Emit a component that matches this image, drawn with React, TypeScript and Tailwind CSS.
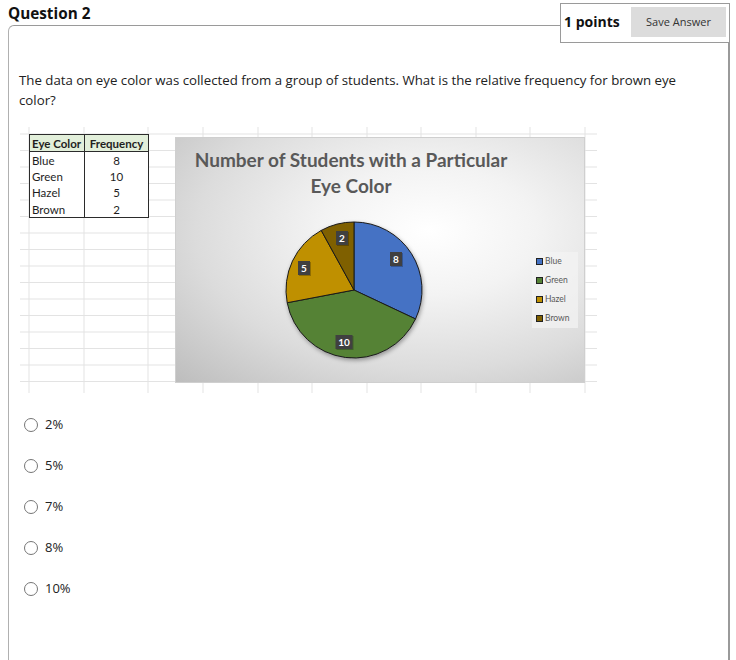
import React from 'react';

const rows = [
  { color: 'Blue', freq: 8 },
  { color: 'Green', freq: 10 },
  { color: 'Hazel', freq: 5 },
  { color: 'Brown', freq: 2 },
];

const legend = [
  { name: 'Blue', fill: '#4472c4' },
  { name: 'Green', fill: '#548235' },
  { name: 'Hazel', fill: '#bf9000' },
  { name: 'Brown', fill: '#7f6000' },
];

const options = ['2%', '5%', '7%', '8%', '10%'];

const vLines = [10, 65, 129, 184, 239, 293, 348, 402, 457, 511, 566];
const hLines = Array.from({ length: 16 }, (_, i) => 7 + i * 16.5);

function SheetGrid() {
  return (
    <svg className="absolute inset-0" width="578" height="266" viewBox="0 0 578 266">
      {hLines.map((y) => (
        <line key={'h' + y} x1="1" x2="578" y1={y} y2={y} stroke="#e3e3e3" strokeWidth="1" />
      ))}
      {vLines.map((x) => (
        <line key={'v' + x} x1={x} x2={x} y1="0" y2="266" stroke="#e3e3e3" strokeWidth="1" />
      ))}
    </svg>
  );
}

function Label({ x, y, text }: { x: number; y: number; text: string }) {
  const w = text.length > 1 ? 17 : 12;
  return (
    <g>
      <rect x={x - w / 2 + 1} y={y - 6} width={w} height={14} fill="#000" opacity="0.25" />
      <rect x={x - w / 2} y={y - 7} width={w} height={14} fill="#404040" />
      <text x={x} y={y + 3.5} textAnchor="middle" fontSize="10" fontWeight="700" fill="#fff" fontFamily="Lato, sans-serif">{text}</text>
    </g>
  );
}

function Pie() {
  return (
    <svg width="150" height="150" viewBox="0 0 150 150" className="shrink-0 overflow-visible">
      <defs>
        <filter id="sh" x="-20%" y="-20%" width="140%" height="140%">
          <feDropShadow dx="1" dy="2" stdDeviation="2" floodColor="#000" floodOpacity="0.35" />
        </filter>
      </defs>
      <g filter="url(#sh)" stroke="#1a1a1a" strokeWidth="1" strokeLinejoin="round">
        <path d="M75 75 L75 7 A68 68 0 0 1 136.53 103.95 Z" fill="#4472c4" />
        <path d="M75 75 L136.53 103.95 A68 68 0 0 1 8.2 87.74 Z" fill="#548235" />
        <path d="M75 75 L8.2 87.74 A68 68 0 0 1 42.24 15.41 Z" fill="#bf9000" />
        <path d="M75 75 L42.24 15.41 A68 68 0 0 1 75 7 Z" fill="#7f6000" />
      </g>
      <Label x={117} y={44} text="8" />
      <Label x={65} y={127} text="10" />
      <Label x={25} y={53} text="5" />
      <Label x={63} y={23} text="2" />
    </svg>
  );
}

function Chart() {
  return (
    <div className="w-[410px] h-[246px] border border-[#cfcfcf] bg-[radial-gradient(ellipse_at_62%_38%,#ffffff_0%,#f3f3f3_30%,#dcdcdc_65%,#bdbdbd_100%)] pt-[9px] font-['Lato',sans-serif]">
      <div className="w-[350px] text-center text-[19px] leading-[26px] font-bold text-[#595959]">
        Number of Students with a Particular<br />Eye Color
      </div>
      <div className="flex items-center mt-[16px]">
        <div className="ml-[103px]">
          <Pie />
        </div>
        <div className="ml-auto mr-[6px] w-[46px] h-[76px] bg-[#f4f4f4]/70 flex flex-col justify-center gap-[7px] pl-[4px]">
          {legend.map((l) => (
            <div key={l.name} className="flex items-center gap-[2px] h-[12px] text-[8.5px] text-[#595959]">
              <span className="w-[7px] h-[7px] border border-[#222]" style={{ background: l.fill }} />
              {l.name}
            </div>
          ))}
        </div>
      </div>
    </div>
  );
}

function SheetImage() {
  return (
    <div className="relative w-[578px] h-[266px] bg-white">
      <SheetGrid />
      <div className="relative flex items-start pl-[10px] pt-[7px]">
        <table className="border-collapse border border-[#2b2b2b] text-[11.5px] leading-[15px] text-[#1e1e1e] font-['Lato',sans-serif]">
          <thead>
            <tr className="bg-[#e2efda] h-[17px]">
              <th className="w-[55px] border border-[#2b2b2b] font-bold text-left pl-[2px]">Eye Color</th>
              <th className="w-[64px] border border-[#2b2b2b] font-bold text-center">Frequency</th>
            </tr>
          </thead>
          <tbody className="bg-white">
            {rows.map((r) => (
              <tr key={r.color} className="h-[16.5px]">
                <td className="border-l border-r border-[#2b2b2b] pl-[2px]">{r.color}</td>
                <td className="border-r border-[#2b2b2b] text-center">{r.freq}</td>
              </tr>
            ))}
          </tbody>
        </table>
        <div className="ml-[26px] mt-[3px]">
          <Chart />
        </div>
      </div>
    </div>
  );
}

export default function App() {
  return (
    <div className="w-[736px] h-[660px] bg-white overflow-hidden font-['Open_Sans',sans-serif] text-[#333]">
      <div className="h-[25px] pl-2 pt-[4px] text-[15.3px] leading-[18px] font-bold text-[#111]">Question 2</div>
      <div className="relative ml-2 w-[722px] h-[640px] border-t border-l border-r-2 border-[#9a9a9a] border-l-[#b0b0b0] rounded-tl-[6px]">
        <div className="absolute right-[-2px] top-[-23px] w-[170px] h-[40px] bg-white border border-[#9a9a9a] flex items-start">
          <span className="ml-[3px] mt-[8px] text-[14px] leading-[20px] font-bold text-[#111]">1 points</span>
          <button className="ml-auto mr-[3px] mt-[3px] w-[95px] h-[30px] bg-[#dcdcdc] text-[11px] text-[#333]">Save Answer</button>
        </div>
        <div className="pl-[10px] pr-[8px] pt-[44px]">
          <p className="text-[13.25px] leading-[20px] text-[#222] w-[680px]">
            The data on eye color was collected from a group of students. What is the relative frequency for brown eye color?
          </p>
          <div className="mt-[17px]">
            <SheetImage />
          </div>
          <div className="mt-[22px] flex flex-col gap-[21px]">
            {options.map((o) => (
              <label key={o} className="flex items-center h-[20px] pl-[5px] gap-[7px] text-[13px] text-[#222]">
                <span className="w-[14px] h-[14px] rounded-full border border-[#767676] bg-white" />
                {o}
              </label>
            ))}
          </div>
        </div>
      </div>
    </div>
  );
}
